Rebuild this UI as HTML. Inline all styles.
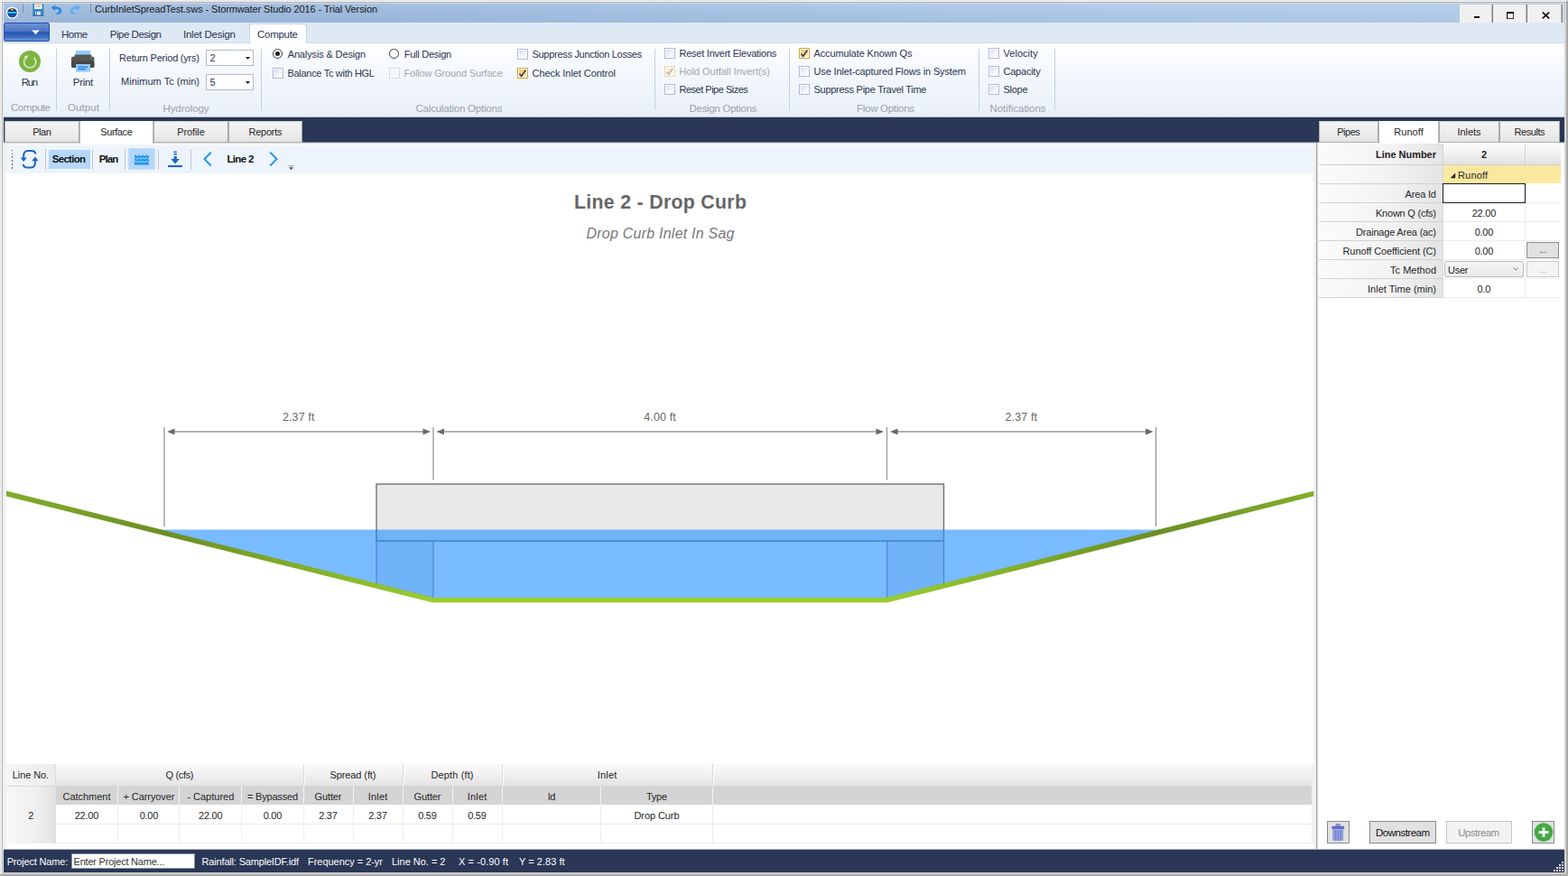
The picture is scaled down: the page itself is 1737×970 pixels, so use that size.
<!DOCTYPE html>
<html lang="en"><head><meta charset="utf-8"><title>CurbInletSpreadTest.sws - Stormwater Studio 2016 - Trial Version</title>
<style>
html,body{margin:0;padding:0;}
body{width:1737px;height:970px;overflow:hidden;position:relative;background:#fff;font-family:"Liberation Sans",sans-serif;}
#app{position:absolute;left:0;top:0;width:1737px;height:970px;overflow:hidden;}
#app div,#app span,#app svg{position:absolute;box-sizing:border-box;}
#app span{white-space:pre;}
</style></head><body><div id="app">
<div style="left:0px;top:0px;width:1737px;height:970px;background:#e6e6e6;"></div>
<div style="left:1px;top:1px;width:1734px;height:967px;background:#f3f3f3;"></div>
<div style="left:2px;top:2px;width:1733px;height:966px;background:#b2b2b2;"></div>
<div style="left:3px;top:3px;width:1730px;height:963px;background:#e9eef5;"></div>
<div style="left:1733px;top:3px;width:2px;height:965px;background:#d6d6d6;"></div>
<div style="left:1735px;top:1px;width:2px;height:969px;background:#a6a6a6;"></div>
<div style="left:2px;top:966px;width:1733px;height:2px;background:#cdcdcd;"></div>
<div style="left:0px;top:968px;width:1737px;height:2px;background:#ababab;"></div>
<header>
<div style="left:4px;top:3px;width:1729px;height:22px;background:linear-gradient(90deg,#a0bbdc 0%,#9fbbdd 25%,#a8c3e3 50%,#b0cbe8 75%,#b3cde9 100%);"></div>
<div style="left:4px;top:3px;width:1729px;height:1px;background:#c3d6ec;"></div>
<div style="left:4px;top:3px;width:1729px;height:22px;background:linear-gradient(180deg,rgba(255,255,255,0.10) 0%,rgba(255,255,255,0) 40%,rgba(60,90,140,0.06) 100%);"></div>
<span style="left:105.00px;top:3.19px;font-size:11px;line-height:14px;letter-spacing:-0.117px;color:#1a1a1a;">CurbInletSpreadTest.sws - Stormwater Studio 2016 - Trial Version</span>
<div style="left:4px;top:25px;width:1729px;height:23px;background:#dfe9f5;"></div>
<div style="left:4px;top:25px;width:51px;height:21px;background:linear-gradient(180deg,#6f92d3 0%,#4a74c4 45%,#2456b4 52%,#3a69be 75%,#6e96d6 100%);border:1px solid #1d4fae;border-radius:2px;"></div>
<svg style="left:34.5px;top:32.5px;" width="9" height="6" viewBox="0 0 9 6"><path d="M0.3 0.5h8.4L4.5 5.2z" fill="#fff"/></svg>
<div style="left:4px;top:47px;width:1729px;height:82px;background:linear-gradient(180deg,#ffffff 0%,#f6f9fd 30%,#e9f0f9 100%);"></div>
<div style="left:4px;top:47px;width:1729px;height:1px;background:#cfdceb;"></div>
<div style="left:276px;top:26px;width:64px;height:22px;background:#fdfeff;border:1px solid #c5d4e6;border-bottom:none;border-radius:3px 3px 0 0;"></div>
<span style="left:68.00px;top:30.52px;font-size:11.5px;line-height:15px;letter-spacing:-0.492px;color:#2a3550;">Home</span>
<span style="left:121.70px;top:30.52px;font-size:11.5px;line-height:15px;letter-spacing:-0.471px;color:#2a3550;">Pipe Design</span>
<span style="left:203.00px;top:30.52px;font-size:11.5px;line-height:15px;letter-spacing:-0.248px;color:#2a3550;">Inlet Design</span>
<span style="left:285.00px;top:30.52px;font-size:11.5px;line-height:15px;letter-spacing:-0.277px;color:#2a3550;">Compute</span>
<div style="left:62px;top:54px;width:1px;height:68px;background:#c3d1e3;"></div>
<div style="left:121px;top:54px;width:1px;height:68px;background:#c3d1e3;"></div>
<div style="left:289px;top:54px;width:1px;height:68px;background:#c3d1e3;"></div>
<div style="left:725px;top:54px;width:1px;height:68px;background:#c3d1e3;"></div>
<div style="left:874px;top:54px;width:1px;height:68px;background:#c3d1e3;"></div>
<div style="left:1084px;top:54px;width:1px;height:68px;background:#c3d1e3;"></div>
<div style="left:1168px;top:54px;width:1px;height:68px;background:#c3d1e3;"></div>
<span style="left:12.00px;top:111.72px;font-size:11.5px;line-height:15px;letter-spacing:-0.444px;color:#9aa0a8;">Compute</span>
<span style="left:75.00px;top:111.72px;font-size:11.5px;line-height:15px;letter-spacing:0.096px;color:#9aa0a8;">Output</span>
<span style="left:180.50px;top:112.72px;font-size:11.5px;line-height:15px;letter-spacing:-0.096px;color:#9aa0a8;">Hydrology</span>
<span style="left:460.50px;top:112.72px;font-size:11.5px;line-height:15px;letter-spacing:-0.207px;color:#9aa0a8;">Calculation Options</span>
<span style="left:763.50px;top:112.72px;font-size:11.5px;line-height:15px;letter-spacing:-0.279px;color:#9aa0a8;">Design Options</span>
<span style="left:949.00px;top:112.72px;font-size:11.5px;line-height:15px;letter-spacing:-0.282px;color:#9aa0a8;">Flow Options</span>
<span style="left:1096.50px;top:112.72px;font-size:11.5px;line-height:15px;letter-spacing:-0.053px;color:#9aa0a8;">Notifications</span>
<svg style="left:21px;top:56px;" width="24" height="24" viewBox="0 0 24 24"><circle cx="12" cy="12" r="12" fill="#7cb342"/><path d="M8.1 7.3A6.6 6.6 0 1 0 16.6 7.6" fill="none" stroke="#dff0c8" stroke-width="1.5"/><path d="M5.6 6.2L10.2 5.2L8.6 9.4z" fill="#e6f4d4"/></svg>
<span style="left:23.75px;top:83.52px;font-size:11.5px;line-height:15px;letter-spacing:-1.298px;color:#2a3550;">Run</span>
<svg style="left:79px;top:56px;" width="26" height="24" viewBox="0 0 26 24"><rect x="5" y="0" width="16" height="8" fill="#90caf9"/><path d="M3.6 4.6h18.8v2.2h1.2a1.8 1.8 0 0 1 1.8 1.8v8.6a1.8 1.8 0 0 1-1.8 1.8H1.6a1.8 1.8 0 0 1-1.6-1.8V8.6a1.8 1.8 0 0 1 1.8-1.8h1.6z" fill="#555"/><rect x="0.4" y="12" width="25" height="7" rx="1.8" fill="#474747"/><rect x="5" y="15" width="16" height="8.5" fill="#90caf9"/><rect x="7.6" y="17.6" width="10.4" height="1.2" fill="#1e6fd9"/><rect x="7.6" y="20" width="8" height="1.2" fill="#1e6fd9"/><circle cx="22" cy="8.6" r="0.9" fill="#00c853"/></svg>
<span style="left:80.75px;top:83.52px;font-size:11.5px;line-height:15px;letter-spacing:-0.287px;color:#2a3550;">Print</span>
<span style="left:132.00px;top:56.89px;font-size:11px;line-height:14px;letter-spacing:-0.218px;color:#2a3550;">Return Period (yrs)</span>
<span style="left:134.00px;top:83.39px;font-size:11px;line-height:14px;letter-spacing:0.028px;color:#2a3550;">Minimum Tc (min)</span>
<div style="left:228px;top:55px;width:53px;height:18px;background:#fff;border:1px solid #b3bcc8;"></div>
<span style="left:232.50px;top:57.19px;font-size:11px;line-height:14px;letter-spacing:-0.214px;color:#2a3550;">2</span>
<svg style="left:271.5px;top:63px;" width="5" height="3" viewBox="0 0 5 3"><path d="M0 0h5L2.5 3z" fill="#222"/></svg>
<div style="left:228px;top:82px;width:53px;height:18px;background:#fff;border:1px solid #b3bcc8;"></div>
<span style="left:232.50px;top:84.19px;font-size:11px;line-height:14px;letter-spacing:-0.214px;color:#2a3550;">5</span>
<svg style="left:271.5px;top:90px;" width="5" height="3" viewBox="0 0 5 3"><path d="M0 0h5L2.5 3z" fill="#222"/></svg>
<div style="left:302px;top:54.1px;width:11px;height:11px;border-radius:50%;background:#fff;border:1px solid #3c3c3c;"></div>
<div style="left:305px;top:57.1px;width:5px;height:5px;border-radius:50%;background:#222;"></div>
<span style="left:318.70px;top:53.09px;font-size:11px;line-height:14px;letter-spacing:-0.135px;color:#2a3550;">Analysis &amp; Design</span>
<div style="left:431px;top:54.1px;width:11px;height:11px;border-radius:50%;background:#fff;border:1px solid #3c3c3c;"></div>
<span style="left:447.70px;top:53.09px;font-size:11px;line-height:14px;letter-spacing:-0.253px;color:#2a3550;">Full Design</span>
<div style="left:302px;top:75px;width:12px;height:12px;background:#fdfdfe;border:1px solid #b4b8dc;"></div>
<div style="left:304px;top:77px;width:8px;height:8px;background:linear-gradient(135deg,#dcdaee,#f3f3fa 60%,#fbfbfe);"></div>
<span style="left:318.50px;top:74.39px;font-size:11px;line-height:14px;letter-spacing:-0.301px;color:#2a3550;">Balance Tc with HGL</span>
<div style="left:431px;top:75px;width:12px;height:12px;background:#fdfdfe;border:1px solid #d6d8ea;"></div>
<div style="left:433px;top:77px;width:8px;height:8px;background:linear-gradient(135deg,#f0f0f8,#fcfcfe);"></div>
<span style="left:447.50px;top:74.39px;font-size:11px;line-height:14px;letter-spacing:-0.160px;color:#a3a7ad;">Follow Ground Surface</span>
<div style="left:573px;top:54px;width:12px;height:12px;background:#fdfdfe;border:1px solid #b4b8dc;"></div>
<div style="left:575px;top:56px;width:8px;height:8px;background:linear-gradient(135deg,#dcdaee,#f3f3fa 60%,#fbfbfe);"></div>
<span style="left:589.50px;top:53.39px;font-size:11px;line-height:14px;letter-spacing:-0.292px;color:#2a3550;">Suppress Junction Losses</span>
<div style="left:573px;top:75px;width:12px;height:12px;background:#fdfdfe;border:1px solid #cfa63c;"></div>
<div style="left:575px;top:77px;width:8px;height:8px;background:linear-gradient(135deg,#fbc459,#fdd98a 55%,#feeabb);"></div>
<svg style="left:573px;top:75px;" width="12" height="12" viewBox="0 0 12 12"><path d="M2.4 6.4L4.6 9.4L9.4 2.4" fill="none" stroke="#37435c" stroke-width="1.7"/></svg>
<span style="left:589.50px;top:74.39px;font-size:11px;line-height:14px;letter-spacing:-0.064px;color:#2a3550;">Check Inlet Control</span>
<div style="left:736px;top:53px;width:12px;height:12px;background:#fdfdfe;border:1px solid #b4b8dc;"></div>
<div style="left:738px;top:55px;width:8px;height:8px;background:linear-gradient(135deg,#dcdaee,#f3f3fa 60%,#fbfbfe);"></div>
<span style="left:752.50px;top:52.39px;font-size:11px;line-height:14px;letter-spacing:-0.242px;color:#2a3550;">Reset Invert Elevations</span>
<div style="left:736px;top:73px;width:12px;height:12px;background:#fdfdfe;border:1px solid #ead9a6;"></div>
<div style="left:738px;top:75px;width:8px;height:8px;background:linear-gradient(135deg,#fdeec6,#fff8e6);"></div>
<svg style="left:736px;top:73px;" width="12" height="12" viewBox="0 0 12 12"><path d="M2.4 6.4L4.6 9.4L9.4 2.4" fill="none" stroke="#b3b6bd" stroke-width="1.7"/></svg>
<span style="left:752.50px;top:72.39px;font-size:11px;line-height:14px;letter-spacing:-0.027px;color:#a3a7ad;">Hold Outfall Invert(s)</span>
<div style="left:736px;top:93px;width:12px;height:12px;background:#fdfdfe;border:1px solid #b4b8dc;"></div>
<div style="left:738px;top:95px;width:8px;height:8px;background:linear-gradient(135deg,#dcdaee,#f3f3fa 60%,#fbfbfe);"></div>
<span style="left:752.50px;top:92.39px;font-size:11px;line-height:14px;letter-spacing:-0.498px;color:#2a3550;">Reset Pipe Sizes</span>
<div style="left:885px;top:53px;width:12px;height:12px;background:#fdfdfe;border:1px solid #cfa63c;"></div>
<div style="left:887px;top:55px;width:8px;height:8px;background:linear-gradient(135deg,#fbc459,#fdd98a 55%,#feeabb);"></div>
<svg style="left:885px;top:53px;" width="12" height="12" viewBox="0 0 12 12"><path d="M2.4 6.4L4.6 9.4L9.4 2.4" fill="none" stroke="#37435c" stroke-width="1.7"/></svg>
<span style="left:901.50px;top:52.39px;font-size:11px;line-height:14px;letter-spacing:-0.132px;color:#2a3550;">Accumulate Known Qs</span>
<div style="left:885px;top:73px;width:12px;height:12px;background:#fdfdfe;border:1px solid #b4b8dc;"></div>
<div style="left:887px;top:75px;width:8px;height:8px;background:linear-gradient(135deg,#dcdaee,#f3f3fa 60%,#fbfbfe);"></div>
<span style="left:901.50px;top:72.39px;font-size:11px;line-height:14px;letter-spacing:-0.140px;color:#2a3550;">Use Inlet-captured Flows in System</span>
<div style="left:885px;top:93px;width:12px;height:12px;background:#fdfdfe;border:1px solid #b4b8dc;"></div>
<div style="left:887px;top:95px;width:8px;height:8px;background:linear-gradient(135deg,#dcdaee,#f3f3fa 60%,#fbfbfe);"></div>
<span style="left:901.50px;top:92.39px;font-size:11px;line-height:14px;letter-spacing:-0.269px;color:#2a3550;">Suppress Pipe Travel Time</span>
<div style="left:1095px;top:53px;width:12px;height:12px;background:#fdfdfe;border:1px solid #b4b8dc;"></div>
<div style="left:1097px;top:55px;width:8px;height:8px;background:linear-gradient(135deg,#dcdaee,#f3f3fa 60%,#fbfbfe);"></div>
<span style="left:1111.50px;top:52.39px;font-size:11px;line-height:14px;letter-spacing:0.041px;color:#2a3550;">Velocity</span>
<div style="left:1095px;top:73px;width:12px;height:12px;background:#fdfdfe;border:1px solid #b4b8dc;"></div>
<div style="left:1097px;top:75px;width:8px;height:8px;background:linear-gradient(135deg,#dcdaee,#f3f3fa 60%,#fbfbfe);"></div>
<span style="left:1111.50px;top:72.39px;font-size:11px;line-height:14px;letter-spacing:-0.229px;color:#2a3550;">Capacity</span>
<div style="left:1095px;top:93px;width:12px;height:12px;background:#fdfdfe;border:1px solid #b4b8dc;"></div>
<div style="left:1097px;top:95px;width:8px;height:8px;background:linear-gradient(135deg,#dcdaee,#f3f3fa 60%,#fbfbfe);"></div>
<span style="left:1111.50px;top:92.39px;font-size:11px;line-height:14px;letter-spacing:-0.284px;color:#2a3550;">Slope</span>
<svg style="left:5px;top:4px;" width="20" height="20" viewBox="0 0 20 20"><circle cx="8.5" cy="10" r="6.6" fill="#fff"/><circle cx="8.5" cy="10" r="5.3" fill="#0a3c8c"/><rect x="3.4" y="9" width="10.2" height="1.8" fill="#1fd0e8"/><path d="M5.5 5.4h6l-3 2.6z" fill="#f5a21b"/><path d="M3.6 11.8h9.8a5.2 5.2 0 0 1-9.8 0z" fill="#0b4fb0"/></svg>
<div style="left:24.5px;top:4px;width:1px;height:10px;background:#7f8ea8;"></div>
<svg style="left:36px;top:4px;" width="13" height="14" viewBox="0 0 13 14"><rect x="0.3" y="0" width="12" height="13.4" rx="1" fill="#2f86c6"/><rect x="2" y="0" width="8.6" height="6" fill="#f2f2f2"/><rect x="2" y="0" width="8.6" height="1.2" fill="#f4b183"/><rect x="3.2" y="2.6" width="6" height="1.3" fill="#b9b9b9"/><rect x="3.2" y="8.8" width="5.8" height="4" fill="#eef3f9"/><rect x="4" y="9.4" width="0.9" height="2.8" fill="#2a5f96"/><rect x="0.3" y="12.6" width="12" height="0.9" fill="#1d4f8a"/></svg>
<svg style="left:56px;top:5px;" width="13" height="12" viewBox="0 0 13 12"><path d="M5.2 0.4L0.6 3.6L5.2 6.8V4.8C8.4 4.6 9.8 6 9.6 7.6C9.4 8.8 8.2 9.4 6.6 9.4L6.8 11C10 11 12.2 9.6 12.2 7C12.2 3.8 9.4 2.2 5.2 2.4z" fill="#1e88e5"/></svg>
<svg style="left:77px;top:5px;" width="13" height="12" viewBox="0 0 13 12"><path d="M7.8 0.4L12.4 3.6L7.8 6.8V4.8C4.6 4.6 3.2 6 3.4 7.6C3.6 8.8 4.8 9.4 6.4 9.4L6.2 11C3 11 0.8 9.6 0.8 7C0.8 3.8 3.6 2.2 7.8 2.4z" fill="#5cadf2"/></svg>
<div style="left:99.5px;top:4px;width:1px;height:10px;background:#7f8ea8;"></div>
<div style="left:1617px;top:5px;width:36px;height:20px;background:#f0f0f0;"></div>
<div style="left:1652px;top:5px;width:1px;height:20px;background:#b9b9b9;"></div>
<div style="left:1653px;top:5px;width:1px;height:20px;background:#7d7d7d;"></div>
<div style="left:1654px;top:5px;width:1px;height:20px;background:#e4eaf2;"></div>
<div style="left:1655px;top:5px;width:36px;height:20px;background:#f0f0f0;"></div>
<div style="left:1690px;top:5px;width:1px;height:20px;background:#b9b9b9;"></div>
<div style="left:1691px;top:5px;width:1px;height:20px;background:#7d7d7d;"></div>
<div style="left:1692px;top:5px;width:1px;height:20px;background:#e4eaf2;"></div>
<div style="left:1693px;top:5px;width:37px;height:20px;background:#f0f0f0;"></div>
<div style="left:1729px;top:5px;width:1px;height:20px;background:#b9b9b9;"></div>
<div style="left:1730px;top:5px;width:1px;height:20px;background:#7d7d7d;"></div>
<div style="left:1731px;top:5px;width:1px;height:20px;background:#e4eaf2;"></div>
<div style="left:1633px;top:18px;width:6px;height:2.4px;background:#111;"></div>
<svg style="left:1669px;top:13px;" width="8.4" height="8.4" viewBox="0 0 8.4 8.4"><rect x="0.6" y="0.6" width="7.2" height="7.2" fill="none" stroke="#111" stroke-width="1.2"/><rect x="0" y="0" width="8.4" height="2.1" fill="#111"/></svg>
<svg style="left:1708px;top:13px;" width="9" height="8" viewBox="0 0 9 8"><path d="M0.8 0.6L8.2 7.4M8.2 0.6L0.8 7.4" stroke="#111" stroke-width="1.7" fill="none"/></svg>
</header>
<main>
<div style="left:4px;top:129px;width:1729px;height:1px;background:#b4bed1;"></div>
<div style="left:4px;top:130px;width:1729px;height:27px;background:#2a3756;"></div>
<div style="left:4px;top:157px;width:1729px;height:1px;background:#6f778c;"></div>
<div style="left:4px;top:158px;width:1455px;height:782px;background:#f1f1f1;"></div>
<div style="left:5px;top:158px;width:1453px;height:1px;background:#dcdcdc;"></div>
<div style="left:5px;top:134px;width:83px;height:24px;background:linear-gradient(180deg,#f3f3f3 0%,#ececec 60%,#e3e3e3 100%);border:1px solid #a8a8a8;border-top-color:#d0d0d0;border-bottom-color:#b0b0b0;"></div>
<span style="left:36.25px;top:139.19px;font-size:11px;line-height:14px;letter-spacing:-0.506px;color:#262626;">Plan</span>
<div style="left:88px;top:134px;width:82px;height:25px;background:#fff;border-left:1px solid #b9b9b9;border-right:1px solid #b9b9b9;"></div>
<span style="left:111.25px;top:139.19px;font-size:11px;line-height:14px;letter-spacing:-0.402px;color:#262626;">Surface</span>
<div style="left:170px;top:134px;width:83px;height:24px;background:linear-gradient(180deg,#f3f3f3 0%,#ececec 60%,#e3e3e3 100%);border:1px solid #a8a8a8;border-top-color:#d0d0d0;border-bottom-color:#b0b0b0;"></div>
<span style="left:196.25px;top:139.19px;font-size:11px;line-height:14px;letter-spacing:-0.114px;color:#262626;">Profile</span>
<div style="left:253px;top:134px;width:82px;height:24px;background:linear-gradient(180deg,#f3f3f3 0%,#ececec 60%,#e3e3e3 100%);border:1px solid #a8a8a8;border-top-color:#d0d0d0;border-bottom-color:#b0b0b0;"></div>
<span style="left:275.50px;top:139.19px;font-size:11px;line-height:14px;letter-spacing:-0.253px;color:#262626;">Reports</span>
<div style="left:7px;top:159px;width:1448px;height:2px;background:#f8f8f8;"></div>
<div style="left:7px;top:161px;width:1448px;height:31px;background:#eef4fb;"></div>
<div style="left:13px;top:165.6px;width:1.4px;height:1.5px;background:#5c5c5c;"></div>
<div style="left:13px;top:169.5px;width:1.4px;height:1.5px;background:#5c5c5c;"></div>
<div style="left:13px;top:173.4px;width:1.4px;height:1.5px;background:#5c5c5c;"></div>
<div style="left:13px;top:177.3px;width:1.4px;height:1.5px;background:#5c5c5c;"></div>
<div style="left:13px;top:181.2px;width:1.4px;height:1.5px;background:#5c5c5c;"></div>
<div style="left:13px;top:185.1px;width:1.4px;height:1.5px;background:#5c5c5c;"></div>
<svg style="left:21px;top:164px;" width="23" height="24" viewBox="0 0 23 24"><g fill="none" stroke="#1b66c9" stroke-width="2"><path d="M5.2 11V7.6a4.6 4.6 0 0 1 4.6-4.6h4.2a4.6 4.6 0 0 1 4.5 3.6"/><path d="M17.9 13.6V17a4.6 4.6 0 0 1-4.6 4.6H9.1a4.6 4.6 0 0 1-4.5-3.6"/></g><path d="M1.6 10.4h7.2L5.2 15z" fill="#1b66c9"/><path d="M14.3 14.2h7.2L17.9 9.6z" fill="#1b66c9"/></svg>
<div style="left:49.9px;top:165px;width:1.2px;height:22.5px;background:#c3c9d1;"></div>
<div style="left:102px;top:165px;width:1.2px;height:22.5px;background:#c3c9d1;"></div>
<div style="left:137.9px;top:165px;width:1.2px;height:22.5px;background:#c3c9d1;"></div>
<div style="left:174.7px;top:165px;width:1.2px;height:22.5px;background:#c3c9d1;"></div>
<div style="left:211.1px;top:165px;width:1.2px;height:22.5px;background:#c3c9d1;"></div>
<div style="left:54px;top:166px;width:46px;height:21px;background:#b4d7fb;"></div>
<span style="left:57.70px;top:168.72px;font-size:11.5px;line-height:15px;letter-spacing:-0.689px;color:#111;font-weight:700;">Section</span>
<span style="left:109.80px;top:168.72px;font-size:11.5px;line-height:15px;letter-spacing:-0.929px;color:#111;font-weight:700;">Plan</span>
<div style="left:142px;top:164px;width:30px;height:24px;background:#b4d7fb;border:1px solid #c4dffb;"></div>
<svg style="left:149px;top:171.2px;" width="16" height="12" viewBox="0 0 16 12"><path d="M0 1.2q1 -1.3 2 0t2 0t2 0t2 0t2 0t2 0t2 0t2 0V11.6H0z" fill="#2196f3"/><path d="M0 4.4q1 -1.3 2 0t2 0t2 0t2 0t2 0t2 0t2 0t2 0" fill="none" stroke="#c6e2fc" stroke-width="0.9"/><path d="M0 8.1q1 -1.3 2 0t2 0t2 0t2 0t2 0t2 0t2 0t2 0" fill="none" stroke="#c6e2fc" stroke-width="0.9"/></svg>
<svg style="left:185.6px;top:167px;" width="16.2" height="19" viewBox="0 0 16.2 19"><rect x="6.5" y="0.6" width="3.3" height="1.5" fill="#1b66c9"/><rect x="6.5" y="3.1" width="3.3" height="1.5" fill="#1b66c9"/><rect x="6.5" y="6" width="3.3" height="3.4" fill="#1b66c9"/><path d="M3.3 9h9.6L8.1 14.5z" fill="#1b66c9"/><rect x="0" y="16" width="16.2" height="2.1" fill="#1b66c9"/></svg>
<svg style="left:224px;top:167px;" width="12" height="18" viewBox="0 0 12 18"><path d="M9.7 1.7L2.5 9.1L9.7 16.5" fill="none" stroke="#2196f3" stroke-width="2"/></svg>
<svg style="left:297px;top:167px;" width="12" height="18" viewBox="0 0 12 18"><path d="M2.3 1.7L9.5 9.1L2.3 16.5" fill="none" stroke="#2196f3" stroke-width="2"/></svg>
<span style="left:251.40px;top:168.72px;font-size:11.5px;line-height:15px;letter-spacing:-0.646px;color:#111;font-weight:700;">Line 2</span>
<svg style="left:319px;top:183px;" width="7" height="6" viewBox="0 0 7 6"><rect x="0.6" y="0.2" width="5.8" height="0.8" fill="#8a8a8a"/><path d="M0.9 2.3h5.2L3.5 5.3z" fill="#555"/></svg>
<div style="left:7px;top:192px;width:1448px;height:654px;background:#fff;"></div>
<span style="left:636.00px;top:210.02px;font-size:21.3px;line-height:28px;letter-spacing:0.307px;color:#666;font-weight:700;">Line 2 - Drop Curb</span>
<span style="left:649.50px;top:247.96px;font-size:16px;line-height:21px;letter-spacing:0.229px;color:#777;font-style:italic;">Drop Curb Inlet In Sag</span>
<svg style="left:0;top:0" width="1460" height="850" viewBox="0 0 1460 850"><defs><clipPath id="cc"><rect x="7" y="192" width="1448.4" height="650"/></clipPath><linearGradient id="gl" x1="7" y1="546" x2="480" y2="665" gradientUnits="userSpaceOnUse"><stop offset="0" stop-color="#84ac2d"/><stop offset="0.38" stop-color="#6b8e23"/><stop offset="1" stop-color="#9acd32"/></linearGradient>
<linearGradient id="gr" x1="1455" y1="546" x2="982" y2="665" gradientUnits="userSpaceOnUse"><stop offset="0" stop-color="#84ac2d"/><stop offset="0.38" stop-color="#6b8e23"/><stop offset="1" stop-color="#9acd32"/></linearGradient></defs>
<rect x="417" y="536" width="628.5" height="63" fill="#e8e8e8" stroke="#747474" stroke-width="1.4"/>
<polygon points="168,586.5 1294,586.5 982,664.5 480,664.5" fill="#1e90ff" fill-opacity="0.6"/>
<polygon points="417,599 480,599 480,662.5 417,646.8" fill="#3a78c8" fill-opacity="0.13"/>
<polygon points="982.6,599 1045.5,599 1045.5,646.8 982.6,662.5" fill="#3a78c8" fill-opacity="0.13"/>
<g fill="none" stroke="#4a88cf" stroke-width="1.2"><path d="M417 599H1045.5"/><path d="M417 586.5V646.5L480 662"/><path d="M1045.5 586.5V646.5L982.6 662"/><path d="M480 599V662"/><path d="M982.6 599V662"/></g>
<g clip-path="url(#cc)"><path d="M-1 544.5L480 664.5" stroke="url(#gl)" stroke-width="5.7" fill="none"/>
<path d="M1463.5 544.5L982 664.5" stroke="url(#gr)" stroke-width="5.7" fill="none"/></g>
<path d="M479 664.5H983" stroke="#9acd32" stroke-width="5.7" fill="none"/>
<g stroke="#979797" stroke-width="1.3" fill="none"><path d="M182 473V583"/><path d="M1280.5 473V583"/><path d="M480 473V531.5"/><path d="M982.5 473V531.5"/>
<path d="M188 478H474"/><path d="M486 478H976"/><path d="M988 478H1275"/></g>
<g fill="#6a6a6a"><path d="M185 478l8.5 -3.6v7.2z"/><path d="M477 478l-8.5 -3.6v7.2z"/><path d="M483.5 478l8.5 -3.6v7.2z"/><path d="M979 478l-8.5 -3.6v7.2z"/><path d="M986 478l8.5 -3.6v7.2z"/><path d="M1277.5 478l-8.5 -3.6v7.2z"/></g></svg>
<span style="left:312.95px;top:453.67px;font-size:12.5px;line-height:16px;letter-spacing:0.125px;color:#676767;">2.37 ft</span>
<span style="left:713.25px;top:453.67px;font-size:12.5px;line-height:16px;letter-spacing:0.125px;color:#676767;">4.00 ft</span>
<span style="left:1113.55px;top:453.67px;font-size:12.5px;line-height:16px;letter-spacing:0.125px;color:#676767;">2.37 ft</span>
<div style="left:7px;top:846px;width:1446px;height:24px;background:linear-gradient(180deg,#fbfbfb 0%,#f0f0f0 50%,#e2e2e2 100%);"></div>
<div style="left:7px;top:870px;width:1446px;height:21px;background:#d4d4d4;"></div>
<div style="left:7px;top:891px;width:1446px;height:43px;background:#fff;"></div>
<div style="left:7px;top:870px;width:55px;height:64px;background:linear-gradient(90deg,#f7f7f7 0%,#efefef 60%,#e2e2e2 100%);"></div>
<div style="left:7px;top:846px;width:55px;height:25px;background:linear-gradient(90deg,#f6f6f6,#ececec);border-right:1px solid #dcdcdc;border-bottom:1px solid #d9d9d9;"></div>
<div style="left:336px;top:846px;width:1px;height:24px;background:#dadada;"></div>
<div style="left:337px;top:846px;width:1px;height:24px;background:#fbfbfb;"></div>
<div style="left:446px;top:846px;width:1px;height:24px;background:#dadada;"></div>
<div style="left:447px;top:846px;width:1px;height:24px;background:#fbfbfb;"></div>
<div style="left:556px;top:846px;width:1px;height:24px;background:#dadada;"></div>
<div style="left:557px;top:846px;width:1px;height:24px;background:#fbfbfb;"></div>
<div style="left:789px;top:846px;width:1px;height:24px;background:#dadada;"></div>
<div style="left:790px;top:846px;width:1px;height:24px;background:#fbfbfb;"></div>
<div style="left:130px;top:870px;width:1px;height:21px;background:#f2f2f2;"></div>
<div style="left:198px;top:870px;width:1px;height:21px;background:#f2f2f2;"></div>
<div style="left:267px;top:870px;width:1px;height:21px;background:#f2f2f2;"></div>
<div style="left:336px;top:870px;width:1px;height:21px;background:#f2f2f2;"></div>
<div style="left:391px;top:870px;width:1px;height:21px;background:#f2f2f2;"></div>
<div style="left:446px;top:870px;width:1px;height:21px;background:#f2f2f2;"></div>
<div style="left:501px;top:870px;width:1px;height:21px;background:#f2f2f2;"></div>
<div style="left:556px;top:870px;width:1px;height:21px;background:#f2f2f2;"></div>
<div style="left:665px;top:870px;width:1px;height:21px;background:#f2f2f2;"></div>
<div style="left:789px;top:870px;width:1px;height:21px;background:#f2f2f2;"></div>
<div style="left:130px;top:891px;width:1px;height:43px;background:#ededed;"></div>
<div style="left:198px;top:891px;width:1px;height:43px;background:#ededed;"></div>
<div style="left:267px;top:891px;width:1px;height:43px;background:#ededed;"></div>
<div style="left:336px;top:891px;width:1px;height:43px;background:#ededed;"></div>
<div style="left:391px;top:891px;width:1px;height:43px;background:#ededed;"></div>
<div style="left:446px;top:891px;width:1px;height:43px;background:#ededed;"></div>
<div style="left:501px;top:891px;width:1px;height:43px;background:#ededed;"></div>
<div style="left:556px;top:891px;width:1px;height:43px;background:#ededed;"></div>
<div style="left:665px;top:891px;width:1px;height:43px;background:#ededed;"></div>
<div style="left:789px;top:891px;width:1px;height:43px;background:#ededed;"></div>
<div style="left:61px;top:891px;width:1px;height:43px;background:#dcdcdc;"></div>
<div style="left:62px;top:912px;width:1391px;height:1px;background:#ebebeb;"></div>
<div style="left:62px;top:933px;width:1391px;height:1px;background:#ebebeb;"></div>
<div style="left:7px;top:934px;width:1448px;height:6px;background:#fdfdfd;"></div>
<div style="left:1453px;top:846px;width:1px;height:45px;background:#ececec;"></div>
<span style="left:13.85px;top:850.99px;font-size:11px;line-height:14px;letter-spacing:-0.096px;color:#262626;">Line No.</span>
<span style="left:183.50px;top:850.99px;font-size:11px;line-height:14px;letter-spacing:-0.333px;color:#262626;">Q (cfs)</span>
<span style="left:365.50px;top:850.99px;font-size:11px;line-height:14px;letter-spacing:-0.097px;color:#262626;">Spread (ft)</span>
<span style="left:477.50px;top:850.99px;font-size:11px;line-height:14px;letter-spacing:0.128px;color:#262626;">Depth (ft)</span>
<span style="left:661.75px;top:850.99px;font-size:11px;line-height:14px;letter-spacing:0.177px;color:#262626;">Inlet</span>
<span style="left:69.50px;top:874.99px;font-size:11px;line-height:14px;letter-spacing:-0.024px;color:#262626;">Catchment</span>
<span style="left:136.50px;top:874.99px;font-size:11px;line-height:14px;letter-spacing:-0.077px;color:#262626;">+ Carryover</span>
<span style="left:207.30px;top:874.99px;font-size:11px;line-height:14px;letter-spacing:0.003px;color:#262626;">- Captured</span>
<span style="left:274.00px;top:874.99px;font-size:11px;line-height:14px;letter-spacing:-0.199px;color:#262626;">= Bypassed</span>
<span style="left:348.50px;top:874.99px;font-size:11px;line-height:14px;letter-spacing:-0.114px;color:#262626;">Gutter</span>
<span style="left:407.75px;top:874.99px;font-size:11px;line-height:14px;letter-spacing:0.177px;color:#262626;">Inlet</span>
<span style="left:458.50px;top:874.99px;font-size:11px;line-height:14px;letter-spacing:-0.114px;color:#262626;">Gutter</span>
<span style="left:517.75px;top:874.99px;font-size:11px;line-height:14px;letter-spacing:0.177px;color:#262626;">Inlet</span>
<span style="left:606.75px;top:874.99px;font-size:11px;line-height:14px;letter-spacing:-0.675px;color:#262626;">Id</span>
<span style="left:716.00px;top:874.99px;font-size:11px;line-height:14px;letter-spacing:-0.283px;color:#262626;">Type</span>
<span style="left:31.25px;top:896.19px;font-size:11px;line-height:14px;letter-spacing:-0.618px;color:#262626;">2</span>
<span style="left:82.75px;top:896.19px;font-size:11px;line-height:14px;letter-spacing:-0.257px;color:#262626;">22.00</span>
<span style="left:154.75px;top:896.19px;font-size:11px;line-height:14px;letter-spacing:-0.304px;color:#262626;">0.00</span>
<span style="left:220.05px;top:896.19px;font-size:11px;line-height:14px;letter-spacing:-0.257px;color:#262626;">22.00</span>
<span style="left:291.75px;top:896.19px;font-size:11px;line-height:14px;letter-spacing:-0.304px;color:#262626;">0.00</span>
<span style="left:353.25px;top:896.19px;font-size:11px;line-height:14px;letter-spacing:-0.304px;color:#262626;">2.37</span>
<span style="left:408.25px;top:896.19px;font-size:11px;line-height:14px;letter-spacing:-0.304px;color:#262626;">2.37</span>
<span style="left:463.25px;top:896.19px;font-size:11px;line-height:14px;letter-spacing:-0.304px;color:#262626;">0.59</span>
<span style="left:518.25px;top:896.19px;font-size:11px;line-height:14px;letter-spacing:-0.304px;color:#262626;">0.59</span>
<span style="left:702.50px;top:896.19px;font-size:11px;line-height:14px;letter-spacing:-0.093px;color:#262626;">Drop Curb</span>
</main>
<footer>
<div style="left:4px;top:940px;width:1729px;height:26px;background:#2a3756;"></div>
<div style="left:4px;top:940px;width:1729px;height:1px;background:#a9aebd;"></div>
<span style="left:7.70px;top:947.39px;font-size:11px;line-height:14px;letter-spacing:-0.183px;color:#fff;">Project Name:</span>
<div style="left:79px;top:945px;width:137px;height:17px;background:#fff;border:1px solid #8a93a3;"></div>
<span style="left:81.60px;top:947.39px;font-size:11px;line-height:14px;letter-spacing:-0.223px;color:#333;">Enter Project Name...</span>
<span style="left:223.60px;top:947.39px;font-size:11px;line-height:14px;letter-spacing:-0.176px;color:#fff;">Rainfall: SampleIDF.idf</span>
<span style="left:341.00px;top:947.39px;font-size:11px;line-height:14px;letter-spacing:-0.030px;color:#fff;">Frequency = 2-yr</span>
<span style="left:434.00px;top:947.39px;font-size:11px;line-height:14px;letter-spacing:-0.012px;color:#fff;">Line No. = 2</span>
<span style="left:508.00px;top:947.39px;font-size:11px;line-height:14px;letter-spacing:0.080px;color:#fff;">X = -0.90 ft</span>
<span style="left:575.00px;top:947.39px;font-size:11px;line-height:14px;letter-spacing:0.034px;color:#fff;">Y = 2.83 ft</span>
<div style="left:1730px;top:963.3px;width:2px;height:2px;background:#e2e4ea;"></div>
<div style="left:1727px;top:963.3px;width:2px;height:2px;background:#e2e4ea;"></div>
<div style="left:1724px;top:963.3px;width:2px;height:2px;background:#e2e4ea;"></div>
<div style="left:1721px;top:963.3px;width:2px;height:2px;background:#e2e4ea;"></div>
<div style="left:1730px;top:960.3px;width:2px;height:2px;background:#e2e4ea;"></div>
<div style="left:1727px;top:960.3px;width:2px;height:2px;background:#e2e4ea;"></div>
<div style="left:1724px;top:960.3px;width:2px;height:2px;background:#e2e4ea;"></div>
<div style="left:1730px;top:957.3px;width:2px;height:2px;background:#e2e4ea;"></div>
<div style="left:1727px;top:957.3px;width:2px;height:2px;background:#e2e4ea;"></div>
<div style="left:1730px;top:954.3px;width:2px;height:2px;background:#e2e4ea;"></div>
</footer>
<aside>
<div style="left:1458px;top:158px;width:1px;height:782px;background:#a6a6a6;"></div>
<div style="left:1459px;top:158px;width:1px;height:782px;background:#d4d4d4;"></div>
<div style="left:1460px;top:158px;width:273px;height:782px;background:#fff;"></div>
<div style="left:1461px;top:134px;width:66px;height:24px;background:linear-gradient(180deg,#f3f3f3 0%,#ececec 60%,#e3e3e3 100%);border:1px solid #a8a8a8;border-top-color:#d0d0d0;border-bottom-color:#b0b0b0;"></div>
<span style="left:1481.25px;top:139.19px;font-size:11px;line-height:14px;letter-spacing:-0.504px;color:#262626;">Pipes</span>
<div style="left:1527px;top:134px;width:67px;height:26px;background:#fff;border-left:1px solid #b9b9b9;border-right:1px solid #b9b9b9;"></div>
<span style="left:1544.25px;top:139.19px;font-size:11px;line-height:14px;letter-spacing:0.057px;color:#262626;">Runoff</span>
<div style="left:1594px;top:134px;width:67px;height:24px;background:linear-gradient(180deg,#f3f3f3 0%,#ececec 60%,#e3e3e3 100%);border:1px solid #a8a8a8;border-top-color:#d0d0d0;border-bottom-color:#b0b0b0;"></div>
<span style="left:1614.50px;top:139.19px;font-size:11px;line-height:14px;letter-spacing:-0.059px;color:#262626;">Inlets</span>
<div style="left:1661px;top:134px;width:67px;height:24px;background:linear-gradient(180deg,#f3f3f3 0%,#ececec 60%,#e3e3e3 100%);border:1px solid #a8a8a8;border-top-color:#d0d0d0;border-bottom-color:#b0b0b0;"></div>
<span style="left:1677.50px;top:139.19px;font-size:11px;line-height:14px;letter-spacing:-0.447px;color:#262626;">Results</span>
<div style="left:1461px;top:159px;width:268px;height:24px;background:linear-gradient(180deg,#fbfbfb 0%,#efefef 55%,#e2e2e2 100%);border-bottom:1px solid #cfcfcf;"></div>
<div style="left:1461px;top:159px;width:137.5px;height:23px;background:linear-gradient(90deg,#fbfbfb 0%,#f3f3f3 55%,#e4e4e4 100%);"></div>
<div style="left:1597.5px;top:159px;width:1px;height:23px;background:#d4d4d4;"></div>
<div style="left:1688.5px;top:159px;width:1px;height:23px;background:#d4d4d4;"></div>
<div style="left:1461px;top:183px;width:137.5px;height:147px;background:linear-gradient(90deg,#fbfbfb 0%,#f3f3f3 55%,#e4e4e4 100%);"></div>
<div style="left:1598.5px;top:183px;width:130.5px;height:20px;background:#fbe8a0;"></div>
<div style="left:1461px;top:203px;width:137.5px;height:1px;background:#d2d2d2;"></div>
<div style="left:1461px;top:224px;width:137.5px;height:1px;background:#d2d2d2;"></div>
<div style="left:1598.5px;top:224px;width:130.5px;height:1px;background:#ececec;"></div>
<div style="left:1461px;top:245px;width:137.5px;height:1px;background:#d2d2d2;"></div>
<div style="left:1598.5px;top:245px;width:130.5px;height:1px;background:#ececec;"></div>
<div style="left:1461px;top:266px;width:137.5px;height:1px;background:#d2d2d2;"></div>
<div style="left:1598.5px;top:266px;width:130.5px;height:1px;background:#ececec;"></div>
<div style="left:1461px;top:287px;width:137.5px;height:1px;background:#d2d2d2;"></div>
<div style="left:1598.5px;top:287px;width:130.5px;height:1px;background:#ececec;"></div>
<div style="left:1461px;top:308px;width:137.5px;height:1px;background:#d2d2d2;"></div>
<div style="left:1598.5px;top:308px;width:130.5px;height:1px;background:#ececec;"></div>
<div style="left:1461px;top:329px;width:137.5px;height:1px;background:#d2d2d2;"></div>
<div style="left:1598.5px;top:329px;width:130.5px;height:1px;background:#ececec;"></div>
<div style="left:1688.5px;top:204px;width:1px;height:21px;background:#ececec;"></div>
<div style="left:1688.5px;top:225px;width:1px;height:21px;background:#ececec;"></div>
<div style="left:1688.5px;top:246px;width:1px;height:21px;background:#ececec;"></div>
<div style="left:1688.5px;top:267px;width:1px;height:21px;background:#ececec;"></div>
<div style="left:1688.5px;top:288px;width:1px;height:21px;background:#ececec;"></div>
<div style="left:1688.5px;top:309px;width:1px;height:21px;background:#ececec;"></div>
<div style="left:1597.5px;top:182px;width:1px;height:148px;background:#dadada;"></div>
<span style="left:1524.00px;top:164.09px;font-size:11px;line-height:14px;letter-spacing:-0.024px;color:#1e1e1e;font-weight:700;">Line Number</span>
<span style="left:1641.05px;top:164.09px;font-size:11px;line-height:14px;letter-spacing:-0.214px;color:#1e1e1e;font-weight:700;">2</span>
<svg style="left:1606.2px;top:190.6px;" width="7" height="7" viewBox="0 0 7 7"><path d="M6.2 0.6V6.2H0.6z" fill="#222"/></svg>
<span style="left:1615.00px;top:186.69px;font-size:11px;line-height:14px;letter-spacing:0.157px;color:#262626;">Runoff</span>
<span style="left:1556.60px;top:207.99px;font-size:11px;line-height:14px;letter-spacing:-0.178px;color:#262626;">Area Id</span>
<span style="left:1524.00px;top:228.99px;font-size:11px;line-height:14px;letter-spacing:-0.224px;color:#262626;">Known Q (cfs)</span>
<span style="left:1630.72px;top:228.99px;font-size:11px;line-height:14px;letter-spacing:-0.241px;color:#262626;">22.00</span>
<span style="left:1502.00px;top:249.99px;font-size:11px;line-height:14px;letter-spacing:-0.196px;color:#262626;">Drainage Area (ac)</span>
<span style="left:1633.67px;top:249.99px;font-size:11px;line-height:14px;letter-spacing:-0.250px;color:#262626;">0.00</span>
<span style="left:1487.50px;top:270.99px;font-size:11px;line-height:14px;letter-spacing:-0.089px;color:#262626;">Runoff Coefficient (C)</span>
<span style="left:1633.67px;top:270.99px;font-size:11px;line-height:14px;letter-spacing:-0.250px;color:#262626;">0.00</span>
<span style="left:1540.00px;top:291.99px;font-size:11px;line-height:14px;letter-spacing:0.031px;color:#262626;">Tc Method</span>
<span style="left:1515.00px;top:312.99px;font-size:11px;line-height:14px;letter-spacing:0.013px;color:#262626;">Inlet Time (min)</span>
<span style="left:1636.62px;top:312.99px;font-size:11px;line-height:14px;letter-spacing:-0.268px;color:#262626;">0.0</span>
<div style="left:1598px;top:203px;width:92px;height:22px;background:#fff;border:1px solid #1a1a1a;"></div>
<div style="left:1691px;top:268px;width:36px;height:18px;background:#e1e1e1;border:1px solid #8a8a8a;"></div>
<span style="left:1704.98px;top:270.03px;font-size:10px;line-height:13px;letter-spacing:-0.146px;color:#333;">...</span>
<div style="left:1691px;top:289px;width:36px;height:18px;background:#f4f4f4;border:1px solid #c9c9c9;"></div>
<span style="left:1704.98px;top:291.53px;font-size:10px;line-height:13px;letter-spacing:-0.146px;color:#a0a0a0;">...</span>
<div style="left:1600px;top:289px;width:88px;height:18px;background:linear-gradient(180deg,#f6f6f6,#e9e9e9);border:1px solid #bdbdbd;border-radius:2px;"></div>
<span style="left:1604.00px;top:291.99px;font-size:11px;line-height:14px;letter-spacing:-0.242px;color:#1e1e1e;">User</span>
<svg style="left:1675.5px;top:295.5px;" width="6" height="4" viewBox="0 0 6 4"><path d="M0.5 0.5L3 3L5.5 0.5" fill="none" stroke="#777" stroke-width="1"/></svg>
<div style="left:1470px;top:909px;width:25px;height:25px;background:#e1e1e1;border:1px solid #8a8a8a;"></div>
<svg style="left:1475px;top:911.6px;" width="15" height="20" viewBox="0 0 15 20"><rect x="4.9" y="0.6" width="4.6" height="3" rx="1.2" fill="#8d99dd" stroke="#6f7ccd" stroke-width="0.9"/><rect x="0.2" y="2.8" width="14" height="3.4" rx="1.4" fill="#5f6dc6"/><path d="M1.1 6.4h12.2l-0.3 11.4a1.4 1.4 0 0 1-1.4 1.3H2.8a1.4 1.4 0 0 1-1.4-1.3z" fill="#8e9be2"/><path d="M4.3 7v11.6M7.2 7v11.6M10.1 7v11.6" stroke="#7683d6" stroke-width="1.1"/></svg>
<div style="left:1517px;top:909px;width:74px;height:25px;background:#e1e1e1;border:1px solid #8a8a8a;"></div>
<span style="left:1524.00px;top:914.52px;font-size:11.5px;line-height:15px;letter-spacing:-0.505px;color:#111;">Downstream</span>
<div style="left:1601.5px;top:909px;width:73.5px;height:25px;background:#f2f2f2;border:1px solid #c4c4c4;"></div>
<span style="left:1615.20px;top:914.52px;font-size:11.5px;line-height:15px;letter-spacing:-0.550px;color:#8d8d8d;">Upstream</span>
<div style="left:1697px;top:909px;width:25px;height:25px;background:#e1e1e1;border:1px solid #8a8a8a;"></div>
<svg style="left:1699px;top:911px;" width="22" height="22" viewBox="0 0 22 22"><circle cx="11" cy="10.6" r="10.3" fill="#43a843"/><path d="M11 5.2V16M5.6 10.6H16.4" stroke="#fff" stroke-width="2.8"/></svg>
</aside>
</div></body></html>
